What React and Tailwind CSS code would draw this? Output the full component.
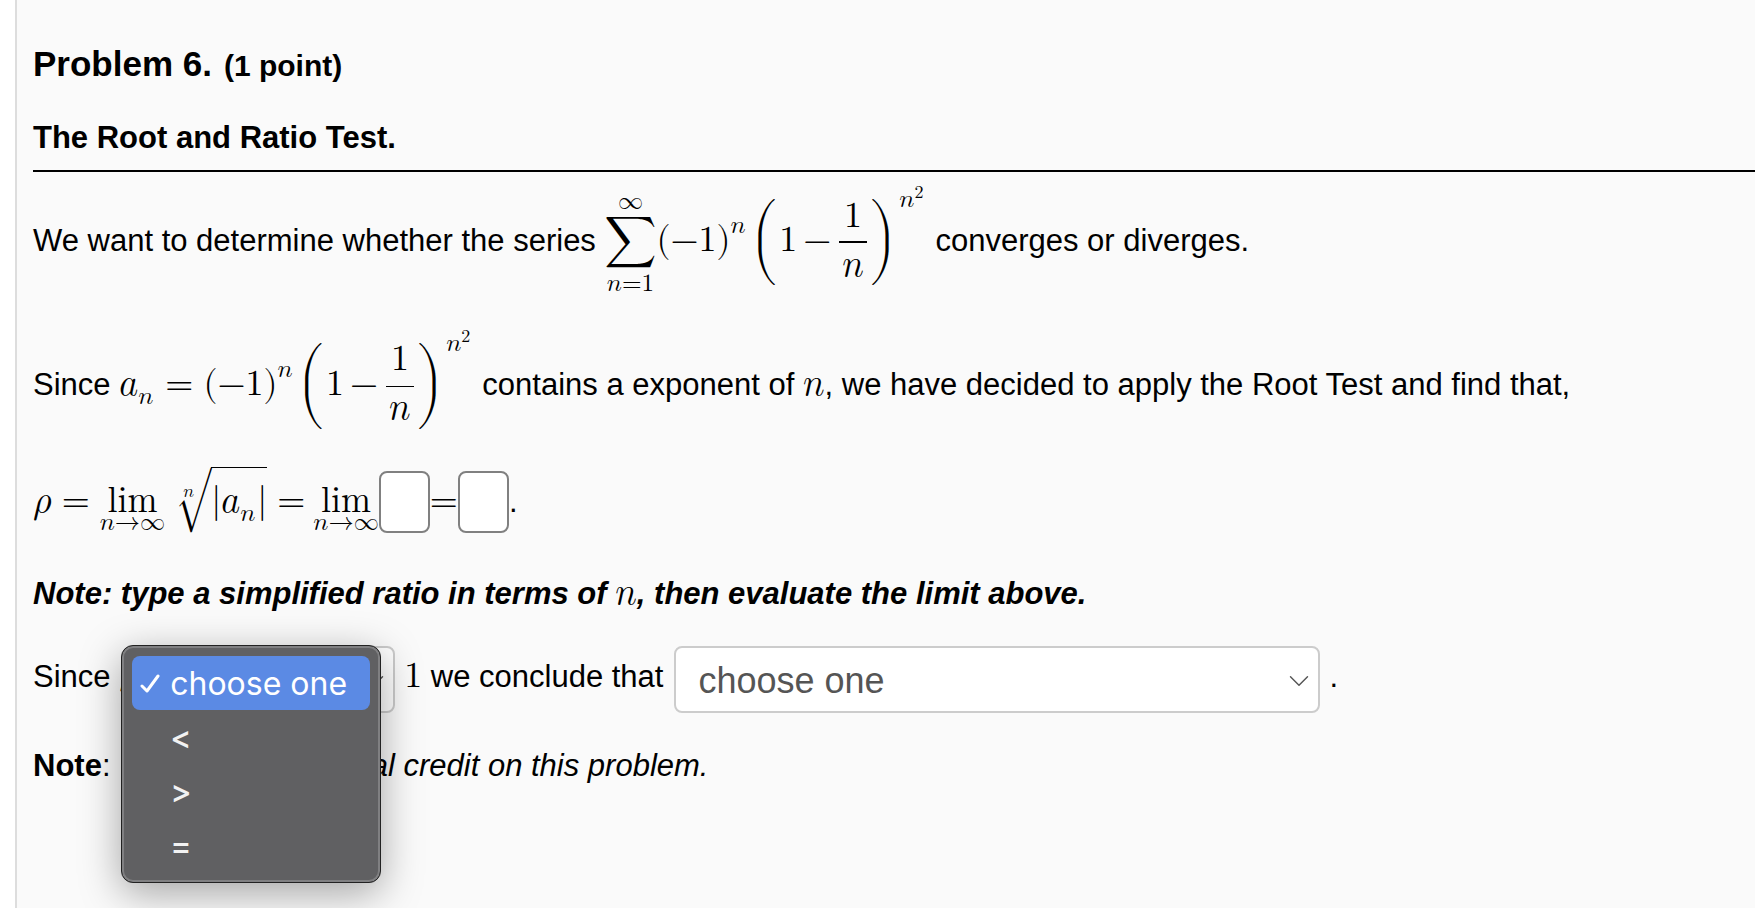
import { useState } from 'react';
import { ChevronDown } from 'lucide-react';

const comparisonOptions = ['choose one', '<', '>', '='];
const conclusionOptions = ['choose one', 'converges', 'diverges', 'inconclusive'];

const mathClass = "text-[36px] leading-none font-normal not-italic font-['Latin_Modern_Math','DejaVu_Math_TeX_Gyre',serif]";

// (-1)^n (1 - 1/n)^(n^2)
function SeriesTerm() {
    return (
        <mrow>
            <mo stretchy="false">(</mo>
            <mo form="prefix" lspace="0" rspace="0">−</mo>
            <mn>1</mn>
            <msup>
                <mo stretchy="false">)</mo>
                <mi>n</mi>
            </msup>
            <msup>
                <mrow>
                    <mo>(</mo>
                    <mn>1</mn>
                    <mo lspace="6px">−</mo>
                    <mfrac>
                        <mn>1</mn>
                        <mrow>
                            <mspace width="3px" />
                            <mi>n</mi>
                            <mspace width="3px" />
                        </mrow>
                    </mfrac>
                    <mspace width="1px" />
                    <mo>)</mo>
                </mrow>
                <msup>
                    <mi>n</mi>
                    <mn>2</mn>
                </msup>
            </msup>
        </mrow>
    );
}

function Limit() {
    return (
        <munder>
            <mi>lim</mi>
            <mrow>
                <mi>n</mi>
                <mo stretchy="false" lspace="0" rspace="0">→</mo>
                <mi mathvariant="normal">∞</mi>
            </mrow>
        </munder>
    );
}

function App() {
    const [comparison, setComparison] = useState('choose one');
    const [conclusion, setConclusion] = useState('choose one');
    const [ratio, setRatio] = useState('');
    const [limit, setLimit] = useState('');
    const [menuOpen, setMenuOpen] = useState(true);

    const pickComparison = (option) => {
        setComparison(option);
        setMenuOpen(false);
    };

    return (
        <div className="min-h-screen bg-white pl-[15px]">
            <main className="min-h-screen overflow-hidden border-l-2 border-[#dddddd] bg-[#fafafa] pl-4 pt-11 text-[31px] leading-10 text-black font-['Liberation_Sans',Arial,sans-serif]">
                <h1 className="flex items-baseline gap-3 font-bold">
                    <span className="text-[35px]">Problem 6.</span>
                    <span className="text-[30px]">(1 point)</span>
                </h1>

                <h2 className="mt-8 font-bold">The Root and Ratio Test.</h2>
                <hr className="mt-3 border-t-2 border-black" />

                <p className="mt-[14px] whitespace-nowrap">
                    We want to determine whether the series{' '}
                    <math className={mathClass} displaystyle="true">
                        <munderover>
                            <mo lspace="0" rspace="0">∑</mo>
                            <mrow>
                                <mi>n</mi>
                                <mo lspace="0" rspace="0">=</mo>
                                <mn>1</mn>
                            </mrow>
                            <mi mathvariant="normal">∞</mi>
                        </munderover>
                        <SeriesTerm />
                    </math>
                    {' '}converges or diverges.
                </p>

                <p className="mt-[39px] whitespace-nowrap">
                    Since{' '}
                    <math className={mathClass} displaystyle="true">
                        <msub>
                            <mi>a</mi>
                            <mi>n</mi>
                        </msub>
                        <mo>=</mo>
                        <SeriesTerm />
                    </math>
                    {' '}contains a exponent of <math className={mathClass}><mi>n</mi></math>, we have decided to apply the Root Test and find that,
                </p>

                <div className="mt-[34px] flex items-baseline">
                    <math className={mathClass} displaystyle="true">
                        <mi>ρ</mi>
                        <mo>=</mo>
                        <Limit />
                        <mroot>
                            <mpadded height="40px" depth="14px">
                                <mo>|</mo>
                                <msub>
                                    <mi>a</mi>
                                    <mi>n</mi>
                                </msub>
                                <mo>|</mo>
                            </mpadded>
                            <mpadded lspace="8px" voffset="-5px">
                                <mi>n</mi>
                            </mpadded>
                        </mroot>
                        <mo lspace="8px" rspace="8px">=</mo>
                        <Limit />
                    </math>
                    <input
                        type="text"
                        aria-label="Simplified ratio"
                        value={ratio}
                        onChange={(e) => setRatio(e.target.value)}
                        className="h-[62px] w-[51px] rounded-lg border-2 border-[#808080] bg-white px-1"
                    />
                    <math className={mathClass}><mo lspace="0" rspace="0">=</mo></math>
                    <input
                        type="text"
                        aria-label="Value of the limit"
                        value={limit}
                        onChange={(e) => setLimit(e.target.value)}
                        className="h-[62px] w-[51px] rounded-lg border-2 border-[#808080] bg-white px-1"
                    />
                    <span>.</span>
                </div>

                <p className="mt-[41px] font-bold italic">
                    Note: type a simplified ratio in terms of <math className={mathClass}><mi>n</mi></math>, then evaluate the limit above.
                </p>

                <div className="mt-8 flex items-center gap-[9px] whitespace-nowrap">
                    <span className="pb-1">Since</span>
                    <math className={mathClass}><mi>ρ</mi></math>
                    <div className="relative">
                        <select
                            aria-label="Comparison"
                            value={comparison}
                            onChange={(e) => setComparison(e.target.value)}
                            className="h-[67px] w-[248px] appearance-none rounded-lg border-2 border-[#cccccc] bg-white px-[22px] pt-1 text-[36px] text-[#555555]"
                        >
                            {comparisonOptions.map(option => (
                                <option key={option}>{option}</option>
                            ))}
                        </select>
                        <ChevronDown className="pointer-events-none absolute right-1 top-[18px] h-[34px] w-[34px] text-[#555555]" strokeWidth={1} />

                        {/* Open menu */}
                        {menuOpen && (
                            <ul
                                role="listbox"
                                aria-label="Comparison options"
                                className="absolute -left-[26px] -top-px w-[260px] rounded-xl border border-[#222222] bg-[#606062] p-2.5 font-['Inter',sans-serif] text-[32px] text-white shadow-[inset_0_0_0_2px_#808082,0_10px_40px_rgba(0,0,0,0.35)]"
                            >
                                {comparisonOptions.map(option => (
                                    <li key={option} role="option" aria-selected={option === comparison}>
                                        <button
                                            type="button"
                                            onClick={() => pickComparison(option)}
                                            className={`flex h-[54px] w-full items-center rounded-lg pl-2 pt-0.5 text-left ${option === comparison ? 'bg-[#5b8ae4]' : 'font-medium text-[#f2f2f2]'}`}
                                        >
                                            <span className="w-[30px]">
                                                {option === comparison && (
                                                    <svg viewBox="0 0 20 20" className="h-5 w-5" fill="none" stroke="currentColor" strokeWidth="3" strokeLinecap="round" strokeLinejoin="round">
                                                        <path d="M2 12 L7 17 L18 2" />
                                                    </svg>
                                                )}
                                            </span>
                                            {option}
                                        </button>
                                    </li>
                                ))}
                            </ul>
                        )}
                    </div>
                    <span className="pb-1 pr-0.5">
                        <math className={mathClass}><mn>1</mn></math> we conclude that
                    </span>
                    <div className="relative">
                        <select
                            aria-label="Conclusion"
                            value={conclusion}
                            onChange={(e) => setConclusion(e.target.value)}
                            className="h-[67px] w-[646px] appearance-none rounded-lg border-2 border-[#cccccc] bg-white px-[22px] pt-1 text-[36px] text-[#555555]"
                        >
                            {conclusionOptions.map(option => (
                                <option key={option}>{option}</option>
                            ))}
                        </select>
                        <ChevronDown className="pointer-events-none absolute right-1 top-[18px] h-[34px] w-[34px] text-[#555555]" strokeWidth={1} />
                    </div>
                    <span className="pb-1">.</span>
                </div>

                <p className="mt-[33px]">
                    <b>Note</b>: <i>You can earn partial credit on this problem.</i>
                </p>
            </main>
        </div>
    );
}

export default App;
